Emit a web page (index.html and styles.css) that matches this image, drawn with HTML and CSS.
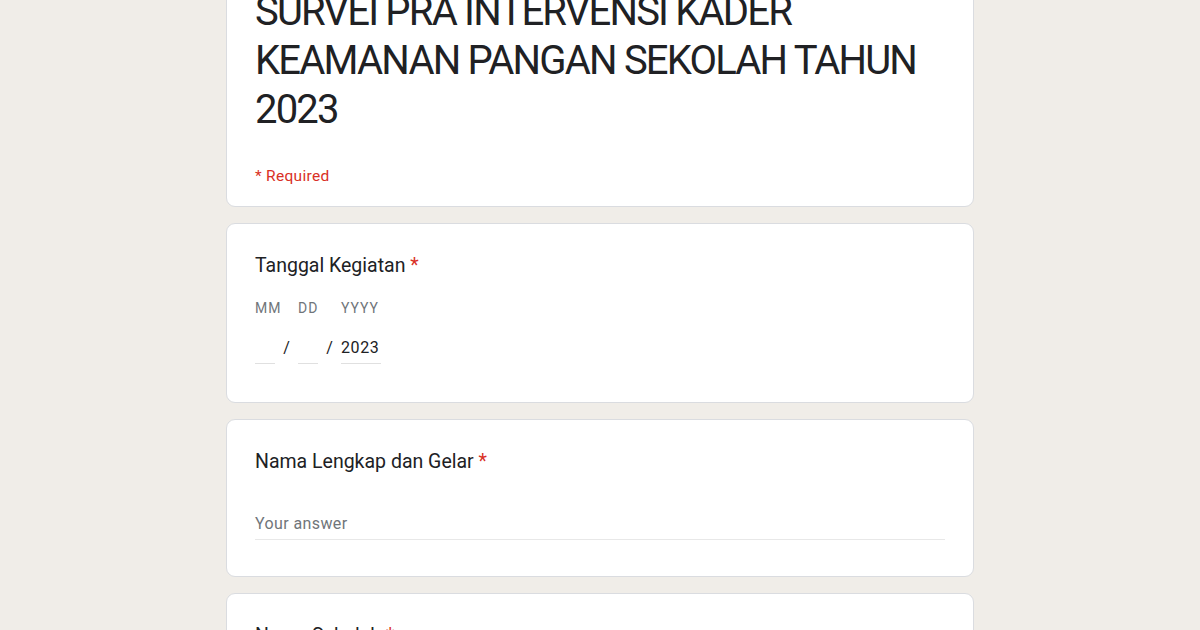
FILE: index.html
```html
<!DOCTYPE html>
<html lang="id">
<head>
<meta charset="utf-8">
<title>SURVEI PRA INTERVENSI KADER KEAMANAN PANGAN SEKOLAH TAHUN 2023</title>
<link rel="stylesheet" href="styles.css">
</head>
<body>
<main class="form">
  <section class="card card-head">
    <h1 class="form-title">SURVEI PRA INTERVENSI KADER<br>KEAMANAN PANGAN SEKOLAH TAHUN<br>2023</h1>
    <div class="required-note">* Required</div>
  </section>

  <section class="card card-date">
    <div class="q-title">Tanggal Kegiatan <span class="star">*</span></div>
    <div class="date-grid">
      <span class="date-label">MM</span>
      <span></span>
      <span class="date-label">DD</span>
      <span></span>
      <span class="date-label">YYYY</span>
      <span class="date-input"></span>
      <span class="date-sep">/</span>
      <span class="date-input"></span>
      <span class="date-sep">/</span>
      <span class="date-input">2023</span>
    </div>
  </section>

  <section class="card card-text">
    <div class="q-title">Nama Lengkap dan Gelar <span class="star">*</span></div>
    <div class="answer">Your answer</div>
  </section>

  <section class="card card-text">
    <div class="q-title">Nama Sekolah <span class="star">*</span></div>
    <div class="answer">Your answer</div>
  </section>
</main>
</body>
</html>
```

FILE: styles.css
```css
html, body {
  margin: 0;
  padding: 0;
  background: #f0ede8;
  height: 100%;
  overflow: hidden;
}

body {
  font-family: Roboto, "Liberation Sans", Arial, sans-serif;
  color: #202124;
}

.form {
  width: 748px;
  margin: -44px auto 0;
  display: flex;
  flex-direction: column;
  gap: 16px;
}

.card {
  background: #ffffff;
  border: 1px solid #dadce0;
  border-radius: 9px;
  padding: 28px;
}

.card-head {
  padding-top: 30px;
  padding-bottom: 20px;
}

.form-title {
  margin: 0;
  font-family: Roboto, "Liberation Sans", Arial, sans-serif;
  font-weight: 400;
  font-size: 40px;
  line-height: 49px;
  letter-spacing: -1.8px;
  color: #202124;
}

.required-note {
  margin-top: 32px;
  font-size: 15.5px;
  line-height: 20px;
  color: #d93025;
  letter-spacing: 0.3px;
}

.q-title {
  font-size: 19.5px;
  line-height: 26px;
  padding-top: 1px;
  color: #202124;
}

.star {
  color: #d93025;
}

.card-date {
  padding-bottom: 38px;
}

.date-grid {
  margin-top: 19px;
  display: grid;
  grid-template-columns: 20px 23px 20px 23px 40px;
  grid-template-rows: 20px auto;
  row-gap: 18px;
}

.date-label {
  font-size: 14px;
  line-height: 20px;
  color: #70757a;
  letter-spacing: 1px;
  white-space: nowrap;
}

.date-input {
  font-size: 16px;
  line-height: 24px;
  padding-bottom: 3px;
  border-bottom: 1px solid #e0e0e0;
  letter-spacing: 0.6px;
  color: #202124;
}

.date-sep {
  font-size: 16px;
  line-height: 24px;
  text-align: center;
  color: #202124;
}

.card-text {
  padding-bottom: 36px;
}

.answer {
  margin-top: 37px;
  font-size: 16px;
  line-height: 24px;
  padding-bottom: 3px;
  border-bottom: 1px solid #e8e8e8;
  color: #70757a;
  letter-spacing: 0.4px;
}
```
